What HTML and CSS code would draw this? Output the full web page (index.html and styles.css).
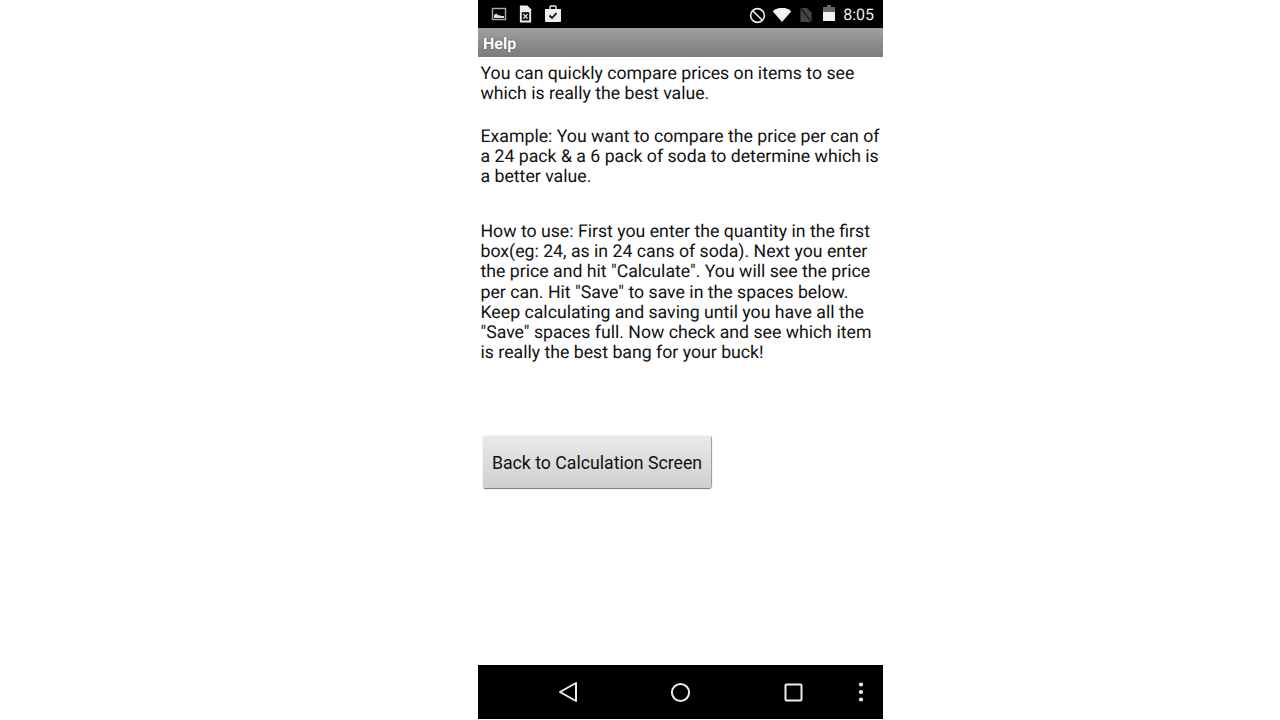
FILE: index.html
```html
<!DOCTYPE html>
<html lang="en">
  <head>
    <meta charset="UTF-8" />
    <meta name="viewport" content="width=device-width, initial-scale=1.0" />
    <title>Help</title>
    <link rel="stylesheet" href="styles.css">
  </head>
  <body>
    <div class="phone">
      <div class="status-bar">
        <div class="status-left">
          <svg class="icon" width="16" height="16" viewBox="0 0 16 16">
            <rect x="1.5" y="2.5" width="13" height="11" fill="none" stroke="#aaa" stroke-width="1.4"/>
            <path d="M3 12V9l2-1.5 2 1.5 2 .6 2 .4h2v2z" fill="#ddd"/>
          </svg>
          <svg class="icon" width="15" height="20" viewBox="0 0 16 20">
            <path d="M2 1h8l4 4v14H2z" fill="#eee"/>
            <rect x="4" y="8" width="8" height="9" fill="#111"/>
            <path d="M5.8 10.2l4.4 4.6M10.2 10.2l-4.4 4.6" stroke="#eee" stroke-width="1.3"/>
          </svg>
          <svg class="icon" width="18" height="18" viewBox="0 0 18 18">
            <path d="M1 4h16v12a1 1 0 0 1-1 1H2a1 1 0 0 1-1-1z" fill="#eee"/>
            <path d="M6 4V2a1 1 0 0 1 1-1h4a1 1 0 0 1 1 1v2" fill="none" stroke="#eee" stroke-width="1.4"/>
            <path d="M5.5 10.5l2.5 2.5 4.5-4.8" fill="none" stroke="#111" stroke-width="1.8"/>
          </svg>
        </div>
        <div class="status-right">
          <svg class="icon blocked" width="17" height="17" viewBox="0 0 17 17">
            <circle cx="8.5" cy="8.5" r="6.9" fill="none" stroke="#eee" stroke-width="1.6"/>
            <path d="M4 4l9 9" stroke="#eee" stroke-width="1.6"/>
          </svg>
          <svg class="icon wifi" width="20" height="14" viewBox="0 0 20 15">
            <path d="M0 3.5a15 15 0 0 1 20 0L10 15z" fill="#f2f2f2"/>
          </svg>
          <svg class="icon sim" width="14" height="15" viewBox="0 0 14 16">
            <path d="M1 16V1h7l5 5v10z" fill="#444"/>
            <path d="M1 1l12 15" stroke="#111" stroke-width="1.2"/>
          </svg>
          <svg class="icon battery" width="12" height="16" viewBox="0 0 12 16">
            <path d="M4 0h4v2h4v14H0V2h4z" fill="#666"/>
            <rect y="7" width="12" height="9" fill="#f2f2f2"/>
          </svg>
          <span class="clock">8:05</span>
        </div>
      </div>

      <div class="title-bar">Help</div>

      <main class="help-text">
        <p class="first">You can quickly compare prices on items to see<br>which is really the best value.</p>
        <p class="example">Example: You want to compare the price per can of<br>a 24 pack &amp; a 6 pack of soda to determine which is<br>a better value.</p>
        <p class="how-to">How to use: First you enter the quantity in the first<br>box(eg: 24, as in 24 cans of soda). Next you enter<br>the price and hit "Calculate". You will see the price<br>per can. Hit "Save" to save in the spaces below.<br>Keep calculating and saving until you have all the<br>"Save" spaces full. Now check and see which item<br>is really the best bang for your buck!</p>
        <button class="back-btn">Back to Calculation Screen</button>
      </main>

      <div class="nav-bar">
        <svg class="nav-back" width="20" height="22" viewBox="0 0 20 22">
          <path d="M18 2v18L2 11z" fill="none" stroke="#eee" stroke-width="2" stroke-linejoin="round"/>
        </svg>
        <svg class="nav-home" width="21" height="21" viewBox="0 0 21 21">
          <circle cx="10.5" cy="10.5" r="8.6" fill="none" stroke="#eee" stroke-width="2"/>
        </svg>
        <svg class="nav-recent" width="19" height="19" viewBox="0 0 19 19">
          <rect x="1.5" y="1.5" width="16" height="16" rx="1" fill="none" stroke="#eee" stroke-width="2"/>
        </svg>
        <svg class="nav-menu" width="6" height="20" viewBox="0 0 6 20">
          <circle cx="3" cy="2.5" r="2.1" fill="#eee"/>
          <circle cx="3" cy="10" r="2.1" fill="#eee"/>
          <circle cx="3" cy="17.5" r="2.1" fill="#eee"/>
        </svg>
      </div>
    </div>
  </body>
</html>
```

FILE: styles.css
```css
* {
  margin: 0;
  padding: 0;
  box-sizing: border-box;
}

body {
  background-color: #fff;
  font-family: Roboto, sans-serif;
  text-rendering: geometricPrecision;
}

.phone {
  width: 405px;
  height: 719px;
  margin-left: 478px;
  display: flex;
  flex-direction: column;
}

.status-bar {
  height: 28px;
  background-color: #000;
  display: flex;
  justify-content: space-between;
  padding: 0 9px 0 13px;
}

.status-left,
.status-right {
  display: flex;
}

.status-left {
  align-items: center;
  gap: 11px;
}

.status-right {
  align-items: flex-start;
  padding-top: 5px;
  gap: 6px;
}

.icon {
  display: block;
}

.blocked {
  margin-top: 2px;
}

.wifi {
  margin-top: 3px;
}

.sim {
  margin: 2px 0 0 1px;
}

.battery {
  margin-left: 4px;
}

.clock {
  color: #eee;
  font-size: 16px;
  line-height: 20px;
  margin-left: 2px;
}

.title-bar {
  height: 29px;
  background: linear-gradient(#a0a0a0, #7c7c7c);
  color: #fff;
  font-size: 16px;
  font-weight: bold;
  line-height: 31px;
  padding-left: 5px;
  text-shadow: 0 0 2px #444;
}

.help-text {
  flex: 1;
  padding: 7px 0 0 2.5px;
  color: #111;
  font-size: 17.7px;
  line-height: 20.1px;
}

.example {
  margin-top: 23px;
}

.how-to {
  margin-top: 34.8px;
}

.back-btn {
  display: block;
  width: 228px;
  height: 52px;
  margin: 73.2px 0 0 2.5px;
  padding-top: 2px;
  background: linear-gradient(#e9e9e9, #d0d0d0);
  border: none;
  border-radius: 2px;
  box-shadow: 0 1px 1px #777, 1px 0 1px #999;
  color: #111;
  font-family: Roboto, sans-serif;
  font-size: 17.7px;
}

.nav-bar {
  height: 54px;
  background-color: #000;
  display: grid;
  grid-template-columns: 80px 20px 92px 21px 93px 19px 55px 6px;
  align-items: center;
}

.nav-back {
  grid-column: 2;
}

.nav-home {
  grid-column: 4;
}

.nav-recent {
  grid-column: 6;
}

.nav-menu {
  grid-column: 8;
}
```
